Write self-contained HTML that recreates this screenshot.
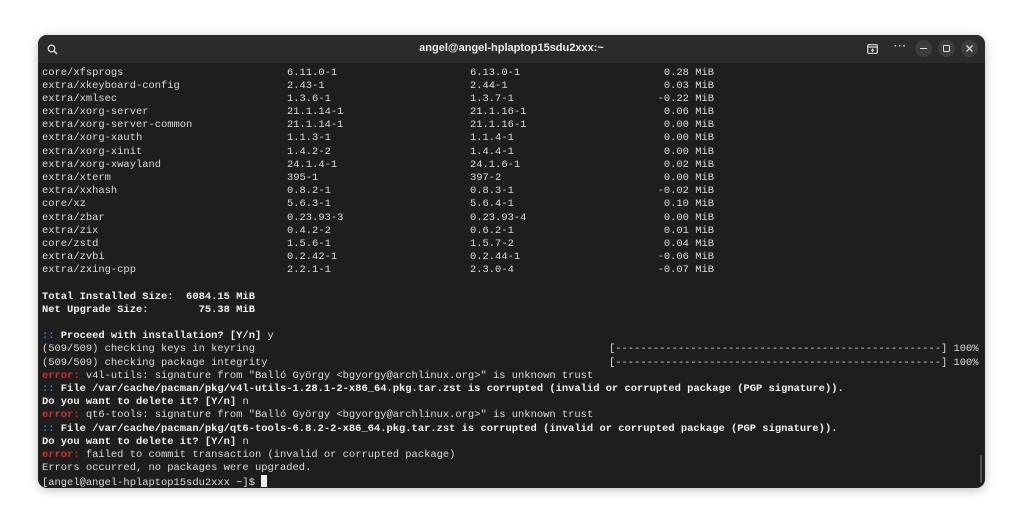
<!DOCTYPE html>
<html><head><meta charset="utf-8"><style>
html,body{margin:0;padding:0;width:1023px;height:530px;background:#fff;overflow:hidden}
.win{position:absolute;left:38px;top:35px;width:947px;height:453px;background:#1e1e1e;border-radius:9px;box-shadow:0 2px 10px rgba(0,0,0,.25);overflow:hidden}
.tb{position:absolute;left:0;top:0;right:0;height:28px;background:#2b2b2b}
.title{position:absolute;left:0;right:0;top:7px;text-align:center;color:#eee;font:bold 11px "Liberation Sans",sans-serif}
.btn{position:absolute;top:5px;width:17px;height:17px;border-radius:50%;background:#3d3d3d}
.t{position:absolute;left:4px;top:31.5px;width:940px;font-family:"Liberation Mono",monospace;font-size:10.45px;color:#dcdcdc}
.r{position:relative;height:13.2px;line-height:13.2px;white-space:pre}
.r span{position:absolute;top:0}
.r span.s{left:560px;width:112px;text-align:right}
.b{font-weight:bold;color:#f2f2f2}
.bl{color:#3b8eea;font-weight:bold}
.e{color:#d03030;font-weight:bold}
</style></head><body>
<div class="win">
<div class="tb">
<svg style="position:absolute;left:9px;top:9px" width="11" height="11" viewBox="0 0 11 11"><circle cx="4.5" cy="4.5" r="3.3" fill="none" stroke="#ddd" stroke-width="1.3"/><line x1="7" y1="7" x2="10" y2="10" stroke="#ddd" stroke-width="1.4"/></svg>
<div class="title">angel@angel-hplaptop15sdu2xxx:~</div>
<svg style="position:absolute;left:829px;top:9px" width="11" height="10" viewBox="0 0 11 10"><rect x="0.7" y="0.7" width="9.6" height="8.6" rx="1" fill="none" stroke="#ddd" stroke-width="1.2"/><line x1="1" y1="3" x2="10" y2="3" stroke="#ddd" stroke-width="1.2"/><path d="M5.5 4.5v3.5M3.8 6.2h3.4" stroke="#ddd" stroke-width="1.1"/></svg>
<div style="position:absolute;left:856px;top:6px;color:#ddd;font:bold 10px 'Liberation Sans';letter-spacing:1px">···</div>
<div class="btn" style="left:877px"><div style="position:absolute;left:5px;top:8px;width:7px;height:1.4px;background:#ddd"></div></div>
<div class="btn" style="left:900px"><div style="position:absolute;left:5px;top:5px;width:5px;height:5px;border:1.2px solid #ddd;border-radius:1px"></div></div>
<div class="btn" style="left:923px"><svg style="position:absolute;left:5px;top:5px" width="7" height="7"><path d="M0.5 0.5L6.5 6.5M6.5 0.5L0.5 6.5" stroke="#ddd" stroke-width="1.3"/></svg></div>
</div>
<div class="t">
<div class="r"><span style="left:0">core/xfsprogs</span><span style="left:245px">6.11.0-1</span><span style="left:428px">6.13.0-1</span><span class="s">0.28 MiB</span></div>
<div class="r"><span style="left:0">extra/xkeyboard-config</span><span style="left:245px">2.43-1</span><span style="left:428px">2.44-1</span><span class="s">0.03 MiB</span></div>
<div class="r"><span style="left:0">extra/xmlsec</span><span style="left:245px">1.3.6-1</span><span style="left:428px">1.3.7-1</span><span class="s">-0.22 MiB</span></div>
<div class="r"><span style="left:0">extra/xorg-server</span><span style="left:245px">21.1.14-1</span><span style="left:428px">21.1.16-1</span><span class="s">0.06 MiB</span></div>
<div class="r"><span style="left:0">extra/xorg-server-common</span><span style="left:245px">21.1.14-1</span><span style="left:428px">21.1.16-1</span><span class="s">0.00 MiB</span></div>
<div class="r"><span style="left:0">extra/xorg-xauth</span><span style="left:245px">1.1.3-1</span><span style="left:428px">1.1.4-1</span><span class="s">0.00 MiB</span></div>
<div class="r"><span style="left:0">extra/xorg-xinit</span><span style="left:245px">1.4.2-2</span><span style="left:428px">1.4.4-1</span><span class="s">0.00 MiB</span></div>
<div class="r"><span style="left:0">extra/xorg-xwayland</span><span style="left:245px">24.1.4-1</span><span style="left:428px">24.1.6-1</span><span class="s">0.02 MiB</span></div>
<div class="r"><span style="left:0">extra/xterm</span><span style="left:245px">395-1</span><span style="left:428px">397-2</span><span class="s">0.00 MiB</span></div>
<div class="r"><span style="left:0">extra/xxhash</span><span style="left:245px">0.8.2-1</span><span style="left:428px">0.8.3-1</span><span class="s">-0.02 MiB</span></div>
<div class="r"><span style="left:0">core/xz</span><span style="left:245px">5.6.3-1</span><span style="left:428px">5.6.4-1</span><span class="s">0.10 MiB</span></div>
<div class="r"><span style="left:0">extra/zbar</span><span style="left:245px">0.23.93-3</span><span style="left:428px">0.23.93-4</span><span class="s">0.00 MiB</span></div>
<div class="r"><span style="left:0">extra/zix</span><span style="left:245px">0.4.2-2</span><span style="left:428px">0.6.2-1</span><span class="s">0.01 MiB</span></div>
<div class="r"><span style="left:0">core/zstd</span><span style="left:245px">1.5.6-1</span><span style="left:428px">1.5.7-2</span><span class="s">0.04 MiB</span></div>
<div class="r"><span style="left:0">extra/zvbi</span><span style="left:245px">0.2.42-1</span><span style="left:428px">0.2.44-1</span><span class="s">-0.06 MiB</span></div>
<div class="r"><span style="left:0">extra/zxing-cpp</span><span style="left:245px">2.2.1-1</span><span style="left:428px">2.3.0-4</span><span class="s">-0.07 MiB</span></div>
<div class="r"> </div>
<div class="r b">Total Installed Size:  6084.15 MiB</div>
<div class="r b">Net Upgrade Size:        75.38 MiB</div>
<div class="r"> </div>
<div class="r"><b class="bl">::</b><b class="b"> Proceed with installation? [Y/n]</b> y</div>
<div class="r">(509/509) checking keys in keyring<span style="left:567px">[----------------------------------------------------] 100%</span></div>
<div class="r">(509/509) checking package integrity<span style="left:567px">[----------------------------------------------------] 100%</span></div>
<div class="r"><b class="e">error:</b> v4l-utils: signature from "Balló György &lt;bgyorgy@archlinux.org&gt;" is unknown trust</div>
<div class="r"><b class="bl">::</b><b class="b"> File /var/cache/pacman/pkg/v4l-utils-1.28.1-2-x86_64.pkg.tar.zst is corrupted (invalid or corrupted package (PGP signature)).</b></div>
<div class="r b">Do you want to delete it? [Y/n] <span style="position:static;font-weight:normal;color:#dcdcdc">n</span></div>
<div class="r"><b class="e">error:</b> qt6-tools: signature from "Balló György &lt;bgyorgy@archlinux.org&gt;" is unknown trust</div>
<div class="r"><b class="bl">::</b><b class="b"> File /var/cache/pacman/pkg/qt6-tools-6.8.2-2-x86_64.pkg.tar.zst is corrupted (invalid or corrupted package (PGP signature)).</b></div>
<div class="r b">Do you want to delete it? [Y/n] <span style="position:static;font-weight:normal;color:#dcdcdc">n</span></div>
<div class="r"><b class="e">error:</b> failed to commit transaction (invalid or corrupted package)</div>
<div class="r">Errors occurred, no packages were upgraded.</div>
<div class="r">[angel@angel-hplaptop15sdu2xxx ~]$ <span style="position:static;display:inline-block;width:6px;height:12px;background:#eee;vertical-align:-2px"></span></div>
</div>
<div style="position:absolute;right:3px;top:420px;width:2px;height:28px;background:#555;border-radius:1px"></div>
</div>
</body></html>
